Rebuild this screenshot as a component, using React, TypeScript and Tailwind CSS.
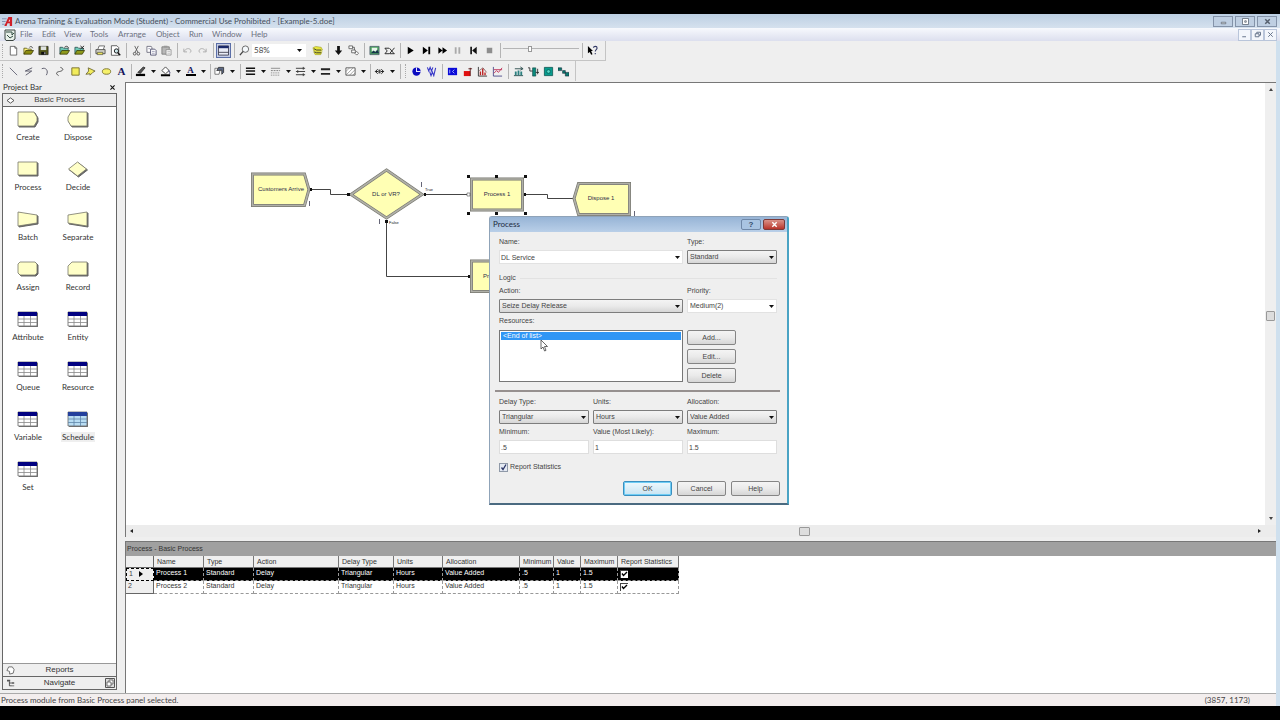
import { useState } from 'react';
import type { ReactNode } from 'react';
import clsx from 'clsx';

/* ---------- toolbar icons, all on a 12x12 grid ---------- */

const icons: Record<string, ReactNode> = {
  new: <path d="M2.5 1.5h5l2 2v7.500h-7zM7.500 1.500v2h2" fill="#fff" stroke="#444" strokeWidth=".8" />,
  open: (
    <>
      <path d="M1 10V3.500h3l1 1h4V6" fill="#fff27a" stroke="#4a4a00" strokeWidth=".8" />
      <path d="M1 10l2-4h8.500l-2.500 4z" fill="#8c8c10" stroke="#333300" strokeWidth=".8" />
      <path d="M7 2.500c1.500-1.500 3-.8 3.500 1" fill="none" stroke="#222" strokeWidth=".8" />
    </>
  ),
  save: (
    <>
      <path d="M1 1.500h10v9H1z" fill="#55581c" stroke="#222" strokeWidth=".8" />
      <path d="M3 1.500h6v4H3z" fill="#dfe3e0" />
      <path d="M3.500 7.500h5v3h-5z" fill="#111" />
      <path d="M7 8h1v2H7z" fill="#ddd" />
    </>
  ),
  attach: (
    <>
      <path d="M1 10V2.500h3l1 1h5V6" fill="#6ec9b6" stroke="#244" strokeWidth=".8" />
      <path d="M1 10l2-4h8.500l-2.500 4z" fill="#8e9a1c" stroke="#333300" strokeWidth=".8" />
      <path d="M6 2.500c2-2 4-1 4.500 1" fill="none" stroke="#222" strokeWidth=".9" />
    </>
  ),
  detach: (
    <>
      <path d="M1 10V2.500h3l1 1h5V6" fill="#6ec9b6" stroke="#244" strokeWidth=".8" />
      <path d="M1 10l2-4h8.500l-2.500 4z" fill="#8e9a1c" stroke="#333300" strokeWidth=".8" />
      <path d="M7 1l4 3.500M11 1L7 4.500" stroke="#222" strokeWidth="1" />
    </>
  ),
  print: (
    <>
      <path d="M3 5l1.500-4h6L9 5" fill="#fff" stroke="#444" strokeWidth=".8" />
      <path d="M1 5h10v4.500H1z" fill="#cfcfc4" stroke="#333" strokeWidth=".8" />
      <path d="M2.500 8h6v2.500h-6z" fill="#e8e05a" stroke="#333" strokeWidth=".6" />
    </>
  ),
  preview: (
    <>
      <path d="M1.500.8h6l2 2v8.400h-8z" fill="#fff" stroke="#333" strokeWidth=".8" />
      <circle cx="7" cy="6.500" r="2.300" fill="#cde7ea" stroke="#111" strokeWidth="1" />
      <path d="M8.500 8.500l2.700 2.700" stroke="#111" strokeWidth="1.400" />
    </>
  ),
  cut: (
    <>
      <path d="M4 1l3.500 7M8 1L4.500 8" stroke="#555" strokeWidth=".9" />
      <circle cx="4" cy="9.500" r="1.500" fill="none" stroke="#555" />
      <circle cx="8" cy="9.500" r="1.500" fill="none" stroke="#555" />
    </>
  ),
  copy: (
    <>
      <path d="M1 1.500h4.500l1 1V8H1z" fill="#fff" stroke="#667" strokeWidth=".9" />
      <path d="M5 4.500h4.500l1.500 1.500v5H5z" fill="#fff" stroke="#446" strokeWidth=".9" />
      <path d="M6.500 7h3M6.500 9h3M2.500 4h2" stroke="#779" strokeWidth=".7" />
    </>
  ),
  paste: (
    <>
      <path d="M1 2h8v8H1z" fill="#b8b8b8" stroke="#777" strokeWidth=".9" />
      <path d="M3 .8h4v2H3z" fill="#999" />
      <path d="M5.500 5h5.500v6H5.500z" fill="#f4f4f4" stroke="#888" strokeWidth=".8" />
      <path d="M7 7h3M7 9h3" stroke="#aaa" strokeWidth=".7" />
    </>
  ),
  undo: <path d="M2 4v3.500h3.500M2.500 7C4 3.500 8 3 9.500 5.500c.6 1.200 0 2.500-1 3" fill="none" stroke="#aaa" />,
  redo: <path d="M10 4v3.500H6.500M9.500 7C8 3.500 4 3 2.500 5.500c-.6 1.200 0 2.500 1 3" fill="none" stroke="#aaa" />,
  split: (
    <>
      <path d="M.5 1h11v10H.5z" fill="#e9ecf6" stroke="#334" strokeWidth=".9" />
      <path d="M.5 1h11v2.500H.5z" fill="#1b2a6b" />
      <path d="M.5 8h11" stroke="#334" strokeWidth=".9" />
    </>
  ),
  zoom: (
    <>
      <circle cx="7" cy="4.500" r="3.500" fill="#f4f8fb" stroke="#555" strokeWidth=".9" />
      <path d="M4.500 7L1 11" stroke="#444" strokeWidth="1.500" />
    </>
  ),
  layers: (
    <>
      <path d="M1 3l3-1.500 6 1 1.500 3-3.500 2-6-1z" fill="#e7e63a" stroke="#99992a" strokeWidth=".6" />
      <path d="M1.500 7l2 3.500h6L11 7" fill="#e2e030" stroke="#99992a" strokeWidth=".6" />
      <path d="M2 4l3 1.500h5M2.500 7.500L5 8.500h5" fill="none" stroke="#333" strokeWidth="1" />
    </>
  ),
  submodel: <path d="M4.500 1h3v5H10l-4 5-4-5h2.500z" fill="#111" />,
  connect: (
    <>
      <path d="M1 1h4v3H1zM4 5.500h4v3H4z" fill="#fff" stroke="#444" strokeWidth=".8" />
      <path d="M9.500 7l2 2-2 2-2-2z" fill="#fff" stroke="#444" strokeWidth=".8" />
      <path d="M5 2.500h2v3" fill="none" stroke="#444" strokeWidth=".8" />
    </>
  ),
  picture: (
    <>
      <path d="M1 1.500h10v9H1z" fill="#4fa562" stroke="#456" strokeWidth=".8" />
      <path d="M3 3h6v4H3z" fill="#e8f4ea" />
      <path d="M2 9l3-3 2 2 2-3 2 4z" fill="#14324a" />
    </>
  ),
  expr: <path d="M5.500 3.500H1L3.500 6.500 1 9.500h5l5.500-6.500M6 3.500l5 6M6.500 9.500h5" fill="none" stroke="#222" strokeWidth="1" />,
  play: <path d="M3 2l6.500 4L3 10z" fill="#000" />,
  step: <path d="M2 2l5.500 4L2 10zM8 2h2v8H8z" fill="#000" />,
  fast: <path d="M1.500 2.500L6 6 1.500 9.500zM6 2.500L11 6 6 9.500z" fill="#000" />,
  pause: <path d="M3 2.500h2v7H3zM7 2.500h2v7H7z" fill="#aaa" />,
  start: <path d="M2.500 2h1.800v8H2.500zM9.500 2v8L4.500 6z" fill="#111" />,
  stop: <path d="M3 3h6v6H3z" fill="#8e8e8e" />,
  help: (
    <>
      <path d="M1 1l5.500 5.500H4.500L6 10l-1.500.6L3 7.500 1 9z" fill="#000" />
      <path d="M7 3c.3-2 4-2 4 .2 0 1.800-2 1.800-2 4M9 8.800v1.400" fill="none" stroke="#333a66" strokeWidth="1.200" />
    </>
  ),
  line: <path d="M2 2l8 8" stroke="#667" />,
  polyline: <path d="M10 2L2.500 5.500h7L3 10" fill="none" stroke="#556" />,
  arc: <path d="M3 3c4-2 8 2 5 7" fill="none" stroke="#556" />,
  bezier: <path d="M7 1.500c5 2 2 4-1 4.500S1 8 5 10.500" fill="none" stroke="#444" />,
  box: <path d="M2 2h8v8H2z" fill="#f2ec5c" stroke="#77702a" />,
  polygon: <path d="M3.500 2l7.500 3.500-2.500 1.500-3 3v-1.500l-4.500.5 3-3.500z" fill="#f2ec5c" stroke="#666030" strokeWidth=".9" />,
  ellipse: <ellipse cx="6" cy="6" rx="4.500" ry="3" fill="#f6f16a" stroke="#77702a" />,
  lineColor: (
    <>
      <path d="M3 7l6-6 2 1-5 6z" fill="#555" stroke="#111" strokeWidth=".7" />
      <path d="M1 8.500h10V11H1z" fill="#000" />
    </>
  ),
  fillColor: (
    <>
      <path d="M2 5l4-4 4 4-4 3.500z" fill="#fff" stroke="#333" strokeWidth=".9" />
      <path d="M9 5c2 1 2 2 1.500 3.500" stroke="#336" fill="none" />
      <path d="M1 9h10v2.200H1z" fill="#000" />
    </>
  ),
  shades: (
    <>
      <path d="M1 2.500h6l-1.500 6.500H1z" fill="#fff" stroke="#555" strokeWidth=".8" />
      <path d="M3 5l2-3.500h5.500V7L8.500 9V4.500z" fill="#5d6a86" stroke="#222" strokeWidth=".8" />
    </>
  ),
  weight: <path d="M1 2.500h10M1 5.500h10M1 9h10" stroke="#111" strokeWidth="1.600" />,
  dashes: (
    <>
      <path d="M1 2.500h10" stroke="#888" />
      <path d="M1 5h10" stroke="#777" strokeDasharray="2 1" />
      <path d="M1 7.500h10M1 10h10" stroke="#777" strokeDasharray="1 1" />
    </>
  ),
  arrows: <path d="M1 2.500h10M1 6h10M1 9.500h10M9 1v3M3 4.500v3M9 8v3" fill="none" stroke="#333" />,
  lineStyle: <path d="M1 3.500h10M1 8.500h10" stroke="#222" strokeWidth="2" />,
  hatch: (
    <>
      <path d="M1 2h10v8H1z" fill="#fff" stroke="#333" strokeWidth=".8" />
      <path d="M1 6l4-4M1 10l8-8M5 10l6-6M8.500 10L11 7.500" stroke="#777" strokeWidth=".7" />
    </>
  ),
  arrowEnd: <path d="M4 3.500L1.500 6 4 8.500M8 3.500L10.500 6 8 8.500M1.500 6h3M7.500 6h3M5.500 4v4M6.500 4v4" fill="none" stroke="#111" />,
  clock: (
    <>
      <circle cx="6" cy="6" r="4.500" fill="#0b0bc0" />
      <path d="M6 1.500V6h4.500" stroke="#e8e8ff" strokeWidth="1.100" fill="none" />
    </>
  ),
  date: <path d="M1.500 1.500l1.500 4 1.500-4 1.500 4 1.500-4M4 6l1.500 4.500L7 6.500l1.500 4L10.500 2" fill="none" stroke="#3838c8" strokeWidth="1.200" />,
  variable: (
    <>
      <path d="M1 2h10v8H1z" fill="#0a0ad8" />
      <path d="M3 4v4M8 4l-2 2 2 2" stroke="#a9b2ff" fill="none" />
    </>
  ),
  level: (
    <>
      <path d="M2 5.500h7V11H2z" fill="#e01010" />
      <path d="M9 2v9M7 3h4" stroke="#501010" strokeWidth=".9" />
    </>
  ),
  histogram: (
    <>
      <path d="M1.500 1v10H11" stroke="#222" fill="none" strokeWidth=".9" />
      <path d="M3 10V6h1.500v4zM5.500 10V3H7v7zM8 10V7h1.500v3z" fill="#b22" />
      <path d="M2.500 5l4-3 4 5" stroke="#622" fill="none" strokeWidth=".7" />
    </>
  ),
  plot: (
    <>
      <path d="M1.500 1v10H11" stroke="#3c3c80" fill="none" strokeWidth=".9" />
      <path d="M2 8l3-3 2 2 4-5M2 4h9" stroke="#c0345c" fill="none" />
    </>
  ),
  queue: (
    <>
      <path d="M1 10.500h10M2 3h8M8 1l3 2-3 1.500" stroke="#173b3b" fill="none" strokeWidth=".9" />
      <path d="M2 6h2v4H2zM5 5h2v5H5zM8 6h2v4H8z" fill="#2b8080" />
    </>
  ),
  resource: (
    <>
      <path d="M5 2h3.500v9H5z" fill="#0a8a7c" stroke="#0a3b38" strokeWidth=".6" />
      <path d="M0 2h2v3.500h3M8.500 7H12M10.500 3v6" stroke="#222" fill="none" strokeWidth=".9" />
    </>
  ),
  global: (
    <>
      <path d="M1.500 1.500h9v9h-9z" fill="#079b8d" stroke="#064d48" strokeWidth=".8" />
      <circle cx="6" cy="6" r="2" fill="#55d8c8" stroke="#064d48" strokeWidth=".7" />
    </>
  ),
  route: <path d="M0 2h4v3H0zM5 5h3v3H5zM8 7h4v4H8z" fill="#0a7a70" stroke="#123" strokeWidth=".6" />,
};

const Icon = ({ name }: { name: string }) => (
  <svg viewBox="0 0 12 12" className="size-[11px] shrink-0" aria-hidden="true">
    {icons[name]}
  </svg>
);

const Caret = () => (
  <svg viewBox="0 0 5 3" className="h-[3px] w-[5px] shrink-0" aria-hidden="true">
    <path d="M0 0h5L2.500 3z" fill="#111" />
  </svg>
);

const Tool = ({ name, active }: { name: string; active?: boolean }) => (
  <button
    type="button"
    aria-label={name}
    className={clsx(
      'flex h-[15px] w-[15px] shrink-0 items-center justify-center',
      active && 'border border-[#5b6fa8] bg-[#c5cde6]'
    )}
  >
    <Icon name={name} />
  </button>
);

const FontTool = ({ label, bar }: { label: string; bar?: boolean }) => (
  <button type="button" aria-label={label} className="flex h-[15px] w-[15px] shrink-0 flex-col items-center justify-center">
    <span
      className={clsx(
        "font-['Liberation_Serif',serif] font-bold text-[#15155c]",
        bar ? 'text-[9px] leading-[8px]' : 'text-[11px] leading-[12px]'
      )}
    >
      A
    </span>
    {bar && <span className="h-[2px] w-[10px] bg-black" />}
  </button>
);

const DropTool = ({ name }: { name: string }) => (
  <div className="flex w-[25px] shrink-0 items-center">
    {name === 'fontColor' ? <FontTool label="fontColor" bar /> : <Tool name={name} />}
    <button type="button" aria-label={`${name} options`} className="flex h-[15px] w-[10px] items-center justify-center">
      <Caret />
    </button>
  </div>
);

const Sep = () => (
  <div className="flex w-[6px] shrink-0 justify-center">
    <div className="h-[15px] w-px bg-[#b4b4b4]" />
  </div>
);

const ThinSep = () => (
  <div className="flex w-[4px] shrink-0 justify-center">
    <div className="h-[15px] w-px bg-[#b4b4b4]" />
  </div>
);

const Grip = () => <div className="mx-[2px] h-[14px] w-[2px] shrink-0 border-l border-dotted border-[#aaa]" />;

const Tools = ({ names }: { names: string[] }) => (
  <>
    {names.map((n) => (
      <Tool key={n} name={n} />
    ))}
  </>
);

/* ---------- window chrome ---------- */

const ArenaLogo = () => (
  <svg viewBox="0 0 12 12" className="size-[11px]" aria-hidden="true">
    <path d="M0 3h5M0 6h4M0 9h3" stroke="#7f8fb0" />
    <path d="M7 1h4v10H8.500V8H6l-1 3H2.500z" fill="#cf1f28" />
    <path d="M8.500 3.500V6H7z" fill="#fff" />
  </svg>
);

const ModelLogo = () => (
  <svg viewBox="0 0 12 12" className="size-[12px]" aria-hidden="true">
    <path d="M1 1h10v9l-2 1.500H2L1 10z" fill="#e8f0ea" stroke="#3a4440" />
    <path d="M2 3h6v3l2-2M3 6l3 3 3-2" fill="none" stroke="#2f4a40" />
  </svg>
);

const menus = [
  ['File', 'w-[22px]'],
  ['Edit', 'w-[22px]'],
  ['View', 'w-[26px]'],
  ['Tools', 'w-[28px]'],
  ['Arrange', 'w-[38px]'],
  ['Object', 'w-[33px]'],
  ['Run', 'w-[23px]'],
  ['Window', 'w-[39px]'],
  ['Help', 'w-[22px]'],
];

const TitleBar = () => (
  <header>
    <div className="flex h-[14px] items-center justify-between bg-linear-to-b from-[#bccfe3] to-[#d5e1ee] pl-[2px] pr-[3px]">
      <div className="flex items-center gap-[2px]">
        <ArenaLogo />
        <h1 className="text-[8px] leading-[14px] text-[#454e5a]">
          Arena Training &amp; Evaluation Mode (Student) - Commercial Use Prohibited - [Example-5.doe]
        </h1>
      </div>
      <div className="flex gap-[2px]">
        {['M3 7h6v2H3z', 'M2 2h8v8H2zM5 5h2v2H5z', 'M3 3l6 6M9 3L3 9'].map((d, i) => (
          <button
            key={d}
            type="button"
            aria-label={['Minimize', 'Restore', 'Close'][i]}
            className="flex h-[11px] w-[20px] items-center justify-center border border-[#8493a9] bg-[#bfcfe2]"
          >
            <svg viewBox="0 0 12 12" className="size-[9px]">
              <path d={d} fill={i === 2 ? 'none' : '#fff'} stroke="#56606e" strokeWidth={i === 2 ? 2 : 1} />
            </svg>
          </button>
        ))}
      </div>
    </div>
    <div className="flex h-[13px] items-center justify-between bg-linear-to-b from-[#f7f9fd] to-[#dcdfee] pl-[4px] pr-[3px]">
      <nav className="flex items-center">
        <ModelLogo />
        <div className="ml-1 flex">
          {menus.map(([label, w]) => (
            <button key={label} type="button" className={clsx('text-left text-[8px] leading-[13px] text-[#6b7080]', w)}>
              {label}
            </button>
          ))}
        </div>
      </nav>
      <div className="flex">
        {['M3 9h5', 'M3 5h5v4H3zM5 5V3h5v4H8', 'M3 3l6 6M9 3L3 9'].map((d, i) => (
          <button
            key={d}
            type="button"
            aria-label={['Minimize model', 'Restore model', 'Close model'][i]}
            className="flex h-[12px] w-[13px] items-center justify-center border border-[#b9c5da] bg-[#f3f6fc]"
          >
            <svg viewBox="0 0 12 12" className="size-[9px]">
              <path d={d} fill="none" stroke="#66748c" strokeWidth="1.300" />
            </svg>
          </button>
        ))}
      </div>
    </div>
  </header>
);

const Toolbars = () => (
  <div className="bg-[#efefef]">
    <div className="flex h-[20px] w-fit items-center border-b border-r border-[#c4c4c4]">
      <Grip />
      <Tools names={['new', 'open', 'save']} />
      <Sep />
      <Tools names={['attach', 'detach']} />
      <Sep />
      <Tools names={['print', 'preview']} />
      <Sep />
      <Tools names={['cut', 'copy', 'paste']} />
      <Sep />
      <Tools names={['undo', 'redo']} />
      <Sep />
      <Tool name="split" active />
      <Sep />
      <Tool name="zoom" />
      <div className="relative mr-1 flex w-[54px] items-center">
        <select
          aria-label="Zoom"
          defaultValue="58%"
          className="h-[13px] w-full appearance-none bg-white pl-[2px] text-[8px] leading-[13px] text-[#444]"
        >
          <option>58%</option>
          <option>100%</option>
        </select>
        <span className="pointer-events-none absolute right-[4px]">
          <Caret />
        </span>
      </div>
      <Tool name="layers" />
      <Sep />
      <Tools names={['submodel', 'connect']} />
      <Sep />
      <Tools names={['picture', 'expr']} />
      <Sep />
      <div className="flex w-[94px] justify-between">
        <Tools names={['play', 'step', 'fast', 'pause', 'start', 'stop']} />
      </div>
      <Sep />
      <input
        type="range"
        aria-label="Animation speed"
        defaultValue={35}
        className="mb-1 h-[8px] w-[76px] appearance-none bg-transparent [&::-webkit-slider-runnable-track]:h-px [&::-webkit-slider-runnable-track]:bg-[#b5b5b5] [&::-webkit-slider-thumb]:-mt-[2px] [&::-webkit-slider-thumb]:h-[6px] [&::-webkit-slider-thumb]:w-[4px] [&::-webkit-slider-thumb]:appearance-none [&::-webkit-slider-thumb]:border [&::-webkit-slider-thumb]:border-[#999] [&::-webkit-slider-thumb]:bg-white"
      />
      <Sep />
      <Tool name="help" />
      <div className="w-[5px]" />
    </div>
    <div className="flex h-[20px] w-fit items-center border-r border-[#c4c4c4]">
      <Grip />
      <div className="flex w-[123px] justify-between">
        <Tools names={['line', 'polyline', 'arc', 'bezier', 'box', 'polygon', 'ellipse']} />
        <FontTool label="Text" />
      </div>
      <ThinSep />
      <DropTool name="lineColor" />
      <DropTool name="fillColor" />
      <DropTool name="fontColor" />
      <ThinSep />
      <DropTool name="shades" />
      <Sep />
      <DropTool name="weight" />
      <DropTool name="dashes" />
      <DropTool name="arrows" />
      <DropTool name="lineStyle" />
      <DropTool name="hatch" />
      <ThinSep />
      <DropTool name="arrowEnd" />
      <Sep />
      <Grip />
      <Tools names={['clock', 'date']} />
      <Sep />
      <Tools names={['variable', 'level', 'histogram', 'plot']} />
      <Sep />
      <Tools names={['queue', 'resource', 'global', 'route']} />
      <div className="w-[4px]" />
    </div>
  </div>
);

/* ---------- project bar ---------- */

const shapes: Record<string, string> = {
  Create: 'M1 1h16l3 5v4l-3 5H1z',
  Dispose: 'M4 1h16v14H4L1 10V6z',
  Process: 'M1 1h19v13H1z',
  Decide: 'M10.5 1l9 7-9 7-9-7z',
  Batch: 'M1 1l19 3v8L1 15z',
  Separate: 'M20 1v14L1 12V4z',
  Assign: 'M3 1h15l2 2v9l-2 2H3l-2-2V3z',
  Record: 'M5 1h15v13H1V5z',
};

const paletteItems = [
  'Create', 'Dispose', 'Process', 'Decide', 'Batch', 'Separate', 'Assign', 'Record',
  'Attribute', 'Entity', 'Queue', 'Resource', 'Variable', 'Schedule', 'Set',
];

const PaletteIcon = ({ name, selected }: { name: string; selected: boolean }) => (
  <svg viewBox="0 0 22 17" className="h-[17px] w-[22px]" aria-hidden="true">
    {shapes[name] ? (
      <>
        <path d={shapes[name]} fill="#666" stroke="#666" transform="translate(1 1)" />
        <path d={shapes[name]} fill="#ffffc8" stroke="#77776a" strokeWidth=".8" />
      </>
    ) : (
      <>
        <path d="M2 2h19v14H2z" fill="#777" />
        <path d="M1 1h19v14H1z" fill={selected ? '#b9ddf3' : '#fff'} stroke="#666" strokeWidth=".8" />
        <path d="M1 1h19v4H1z" fill={selected ? '#233f9c' : '#000080'} />
        <path d="M1 8h19M1 11.500h19M7 5v10M13.500 5v10" stroke={selected ? '#5f86a8' : '#888'} strokeWidth=".8" />
      </>
    )}
  </svg>
);

const ProjectBar = () => {
  const [selected, setSelected] = useState('Schedule');
  return (
    <aside className="flex w-[124px] shrink-0 flex-col bg-[#efefef] pb-[3px] pl-[2px] pr-[7px]">
      <div className="flex h-[11px] items-center justify-between pl-px pr-[2px] text-[8px] leading-[11px] text-[#333]">
        <span>Project Bar</span>
        <button type="button" aria-label="Close project bar" className="flex size-[5px] items-center">
          <svg viewBox="0 0 6 6">
            <path d="M.5.5l5 5M5.500.5l-5 5" stroke="#111" strokeWidth="1.300" />
          </svg>
        </button>
      </div>
      <div className="flex min-h-0 grow flex-col border border-[#666] bg-white">
        <button
          type="button"
          className="relative flex h-[13px] shrink-0 items-center justify-center border-b border-[#666] bg-[#ececec] font-['Liberation_Sans',sans-serif] text-[8px] text-[#444]"
        >
          <svg viewBox="0 0 10 8" className="absolute left-[3px] h-[7px] w-[9px]">
            <path d="M5 1l4 3-4 3-4-3z" fill="#fff" stroke="#444" />
          </svg>
          Basic Process
        </button>
        <div className="grid grow grid-cols-[50px_50px] auto-rows-[50px] content-start pt-[4px]">
          {paletteItems.map((name) => (
            <button
              key={name}
              type="button"
              onClick={() => setSelected(name)}
              className="flex flex-col items-center text-[8px] leading-[10px] text-[#333]"
            >
              <PaletteIcon name={name} selected={name === selected} />
              <span className={clsx('mt-1 px-px', name === selected && 'bg-[#efefef]')}>{name}</span>
            </button>
          ))}
        </div>
        <button
          type="button"
          className="relative h-[13px] shrink-0 border-t border-[#999] bg-[#efefef] font-['Liberation_Sans',sans-serif] text-[8px] leading-[12px] text-[#333]"
        >
          <svg viewBox="0 0 10 10" className="absolute left-[3px] top-[2px] size-[9px]">
            <path d="M3 1h4l2 3-1 4-4 1V6L1 5z" fill="#fff" stroke="#666" />
          </svg>
          Reports
        </button>
        <button
          type="button"
          className="relative h-[13px] shrink-0 border-t border-[#666] bg-[#efefef] font-['Liberation_Sans',sans-serif] text-[8px] leading-[12px] text-[#333]"
        >
          <svg viewBox="0 0 10 10" className="absolute left-[4px] top-[2px] size-[8px]">
            <path d="M0 1h4v2H0zM6 4h3v2H6zM6 8h3v1H6z" fill="#555" />
            <path d="M3 3v5.500h3M3 5h3" fill="none" stroke="#333" />
          </svg>
          Navigate
          <svg viewBox="0 0 10 10" className="absolute right-[1px] top-[1px] size-[10px]">
            <path d="M.5.5h9v9h-9z" fill="#ddd" stroke="#555" />
            <path d="M2 4h4v4H2zM4 4V2h4v4H6" fill="#fff" stroke="#555" strokeWidth=".8" />
          </svg>
        </button>
      </div>
    </aside>
  );
};

/* ---------- model canvas ---------- */

const Node = ({ d, x, y, label }: { d: string; x: number; y: number; label: string }) => (
  <g>
    <path d={d} fill="#ffffb4" stroke="#77776f" strokeWidth="3" />
    <path d={d} fill="none" stroke="#b0b0a8" strokeWidth="1.600" />
    <text x={x} y={y} textAnchor="middle" fontSize="6" fill="#2c2c48">
      {label}
    </text>
  </g>
);

const Flowchart = () => (
  <svg
    viewBox="126 83 520 230"
    className="block h-[230px] w-[520px] font-['Liberation_Sans',sans-serif]"
    role="img"
    aria-label="Model flowchart"
  >
    <g fill="none" stroke="#444" strokeWidth="1">
      <path d="M311 189.500h19.500v5H350M425 194.500h44M524 194.500h23.500v4H573M386.500 220v56.500H470" />
    </g>
    <Node d="M252.500 174H304.500L309 189.500L304.500 205.500H252.500z" x={281} y={191} label="Customers Arrive" />
    <Node d="M386.500 170L422 194.500L386.500 218L351 194.500z" x={386} y={196} label="DL or VR?" />
    <Node d="M471.500 179H522.500V210H471.500z" x={497} y={196} label="Process 1" />
    <Node d="M578.500 183.500H629.500V214.500H578.500L574 198.500z" x={601} y={200} label="Dispose 1" />
    <Node d="M471.500 261H522.500V291.500H471.500z" x={486} y={278} label="Pr" />
    <path
      fill="#111"
      d="M467 175h3v3h-3zM495 175h3v3h-3zM524 175h3v3h-3zM467 212h3v3h-3zM495 212h3v3h-3zM524 212h3v3h-3z"
    />
    <path fill="#111" d="M310 188h2v3h-2zM347 193h3v3h-3zM424 193h2v3h-2zM385 220h3v3h-3zM468 275h2v3h-2zM524 193h2v3h-2z" />
    <path d="M467 193h3v3h-3z" fill="#fff" stroke="#555" strokeWidth=".6" />
    <path d="M309.500 201v5M421.500 182v5M379.500 219v5M634.500 211v5" stroke="#667" />
    <text x="425" y="191" fontSize="4" fill="#222">True</text>
    <text x="389" y="224" fontSize="4" fill="#222">False</text>
  </svg>
);

/* ---------- process dialog ---------- */

const face = 'bg-linear-to-b from-[#f4f4f4] via-[#eaeaea] to-[#d6d6d6]';

const Select = ({ id, label, options, flat }: { id: string; label: string; options: string[]; flat?: boolean }) => (
  <div className="flex flex-col gap-[3px]">
    <label htmlFor={id} className="h-[10px] leading-[10px]">{label}</label>
    <div className="relative flex items-center">
      <select
        id={id}
        className={clsx(
          'h-[14px] w-full appearance-none border pl-[2px] leading-[12px]',
          flat ? 'border-[#e2e2e2] bg-white' : ['rounded-[1px] border-[#7d7d7d]', face]
        )}
      >
        {options.map((o) => (
          <option key={o}>{o}</option>
        ))}
      </select>
      <span className="pointer-events-none absolute right-[3px]">
        <Caret />
      </span>
    </div>
  </div>
);

const TextField = ({ id, label, value }: { id: string; label: string; value: string }) => (
  <div className="flex flex-col gap-[3px]">
    <label htmlFor={id} className="h-[10px] leading-[10px]">{label}</label>
    <input id={id} defaultValue={value} className="h-[14px] w-full border border-[#dedede] bg-white pl-px" />
  </div>
);

const DialogButton = ({ children, primary }: { children: ReactNode; primary?: boolean }) => (
  <button
    type="button"
    className={clsx(
      'h-[15px] w-[49px] rounded-[2px] border text-center leading-[13px]',
      primary ? 'border-[#3a8fc0] bg-linear-to-b from-[#eef8fd] to-[#c8e4f2] ring-1 ring-inset ring-[#6fcdf5]' : ['border-[#858585]', face]
    )}
  >
    {children}
  </button>
);

const ProcessDialog = () => (
  <section
    role="dialog"
    aria-label="Process"
    className="absolute left-[363px] top-[133px] w-[300px] rounded-t-[3px] border border-b-2 border-r-2 border-[#8fa3b8] border-b-[#4a6a80] border-r-[#4aa3c4] bg-[#efefef] font-['Liberation_Sans',sans-serif] text-[7px] text-[#444]"
  >
    <div className="flex h-[15px] items-center justify-between bg-linear-to-b from-[#97b4d6] to-[#b9cfe8] pl-[3px] pr-[2px]">
      <h2 className="font-['Lato',sans-serif] text-[8px] leading-[15px] text-[#1d2b40]">Process</h2>
      <div className="mb-px flex gap-[2px]">
        <button type="button" aria-label="Help" className="h-[11px] w-[20px] rounded-[2px] border border-[#6f88a8] bg-[#a9c4e2] text-[8px] font-bold leading-[9px] text-[#33496a]">
          ?
        </button>
        <button type="button" aria-label="Close" className="flex h-[11px] w-[22px] items-center justify-center rounded-[2px] border border-[#7c3a38] bg-linear-to-b from-[#d99088] to-[#b8322a]">
          <svg viewBox="0 0 8 8" className="size-[7px]">
            <path d="M1.500 1.500l5 5M6.500 1.500l-5 5" stroke="#fff" strokeWidth="1.600" />
          </svg>
        </button>
      </div>
    </div>

    <form className="pb-[7px] pl-[9px] pr-[7px] pt-[5px]">
      <div className="grid grid-cols-3 gap-x-1 pr-[3px]">
        <div className="col-span-2 flex flex-col gap-[3px]">
          <label htmlFor="name" className="h-[10px] leading-[10px]">Name:</label>
          <div className="relative flex items-center">
            <input id="name" defaultValue="DL Service" className="h-[14px] w-full border border-[#e2e2e2] bg-white pl-px" />
            <button type="button" aria-label="Names" className="absolute right-[3px]">
              <Caret />
            </button>
          </div>
        </div>
        <Select id="type" label="Type:" options={['Standard', 'Submodel']} />
      </div>

      <fieldset className="mt-[9px] pr-[3px]">
        <div className="mb-[3px] flex items-center gap-1">
          <span className="leading-[10px]">Logic</span>
          <div className="h-px grow bg-[#e2e2e2]" />
        </div>
        <div className="grid grid-cols-3 gap-x-1">
          <div className="col-span-2">
            <Select id="action" label="Action:" options={['Seize Delay Release', 'Delay', 'Seize Delay']} />
          </div>
          <Select id="priority" label="Priority:" options={['Medium(2)', 'High(1)', 'Low(3)']} flat />
        </div>
        <label htmlFor="resources" className="mt-[3px] block leading-[10px]">Resources:</label>
        <div className="mt-[4px] grid grid-cols-3 gap-x-1">
          <ul id="resources" className="col-span-2 h-[52px] border border-[#777] bg-white p-px">
            <li className="bg-[#3096f5] pl-[2px] leading-[8px] text-white">&lt;End of list&gt;</li>
          </ul>
          <div className="flex flex-col gap-1">
            <DialogButton>Add...</DialogButton>
            <DialogButton>Edit...</DialogButton>
            <DialogButton>Delete</DialogButton>
          </div>
        </div>
      </fieldset>

      <hr className="-ml-[4px] mt-[7px] h-[2px] border-0 bg-[#96908f]" />

      <div className="mt-[5px] grid grid-cols-3 gap-x-1 gap-y-[3px] pr-[3px]">
        <Select id="delay" label="Delay Type:" options={['Triangular', 'Constant', 'Normal']} />
        <Select id="units" label="Units:" options={['Hours', 'Minutes']} />
        <Select id="alloc" label="Allocation:" options={['Value Added', 'Transfer']} />
        <TextField id="min" label="Minimum:" value=".5" />
        <TextField id="likely" label="Value (Most Likely):" value="1" />
        <TextField id="max" label="Maximum:" value="1.5" />
      </div>

      <label className="mt-[8px] flex items-center gap-[2px] leading-[10px]">
        <span className="relative flex">
          <input type="checkbox" defaultChecked className="peer size-[9px] appearance-none border border-[#8f99a8] bg-[#e4e9f2]" />
          <svg viewBox="0 0 9 9" className="pointer-events-none absolute inset-0 hidden size-[9px] peer-checked:block">
            <path d="M2.500 4.500l1.500 2 3-5" fill="none" stroke="#2b3566" strokeWidth="1.300" />
          </svg>
        </span>
        Report Statistics
      </label>

      <div className="mt-[9px] flex justify-end gap-[5px]">
        <DialogButton primary>OK</DialogButton>
        <DialogButton>Cancel</DialogButton>
        <DialogButton>Help</DialogButton>
      </div>
    </form>

    <svg viewBox="0 0 9 13" className="pointer-events-none absolute left-[50px] top-[122px] h-[13px] w-[9px]" aria-hidden="true">
      <path d="M1 1v9l2-2 1.600 4 1.400-.6L4.500 7.500H7.500z" fill="#fff" stroke="#444" strokeWidth=".8" />
    </svg>
  </section>
);

const Canvas = () => (
  <div className="flex grow flex-col border-l border-t border-[#777]">
    <div className="flex min-h-0 grow">
      <div className="relative min-w-0 grow bg-white">
        <Flowchart />
        <ProcessDialog />
      </div>
      <div className="flex w-[11px] shrink-0 flex-col items-center justify-between bg-[#efefef] py-[5px]">
        <svg viewBox="0 0 4 3" className="h-[3px] w-[4px]"><path d="M0 3h4L2 0z" fill="#444" /></svg>
        <div className="mt-[23px] h-[10px] w-[9px] rounded-[1px] border border-[#999] bg-[#ddd]" />
        <svg viewBox="0 0 4 3" className="h-[3px] w-[4px]"><path d="M0 0h4L2 3z" fill="#444" /></svg>
      </div>
    </div>
    <div className="flex h-[12px] shrink-0 items-center bg-[#ececec] pl-[4px] pr-[15px]">
      <svg viewBox="0 0 3 4" className="h-[4px] w-[3px]"><path d="M3 0v4L0 2z" fill="#222" /></svg>
      <div className="grow-[667]" />
      <div className="h-[9px] w-[11px] rounded-[1px] border border-[#999] bg-[#ddd]" />
      <div className="grow-[448]" />
      <svg viewBox="0 0 3 4" className="h-[4px] w-[3px]"><path d="M0 0v4l3-2z" fill="#222" /></svg>
    </div>
  </div>
);

/* ---------- spreadsheet ---------- */

const columns = [
  { name: 'Name', w: 'w-[50px]' },
  { name: 'Type', w: 'w-[50px]' },
  { name: 'Action', w: 'w-[85px]' },
  { name: 'Delay Type', w: 'w-[55px]' },
  { name: 'Units', w: 'w-[49px]' },
  { name: 'Allocation', w: 'w-[77px]' },
  { name: 'Minimum', w: 'w-[34px]' },
  { name: 'Value', w: 'w-[27px]' },
  { name: 'Maximum', w: 'w-[37px]' },
  { name: 'Report Statistics', w: 'w-[61px]' },
];

const rows = [
  ['Process 1', 'Standard', 'Delay', 'Triangular', 'Hours', 'Value Added', '.5', '1', '1.5'],
  ['Process 2', 'Standard', 'Delay', 'Triangular', 'Hours', 'Value Added', '.5', '1', '1.5'],
];

const Sheet = () => (
  <section className="h-[152px] shrink-0 border-l border-t border-[#777] bg-white font-['Liberation_Sans',sans-serif] text-[7px] text-[#333]">
    <h2 className="h-[14px] bg-[#a0a0a0] pl-px text-[7px] leading-[14px] text-[#333]">Process - Basic Process</h2>
    <table className="w-[553px] table-fixed border-separate border-spacing-0">
      <thead>
        <tr className="h-[12px] bg-[#efefef]">
          <th className="w-[28px] border-b border-r border-[#666] p-0" aria-label="Row" />
          {columns.map((c) => (
            <th key={c.name} className={clsx('whitespace-nowrap border-b border-r border-[#777] p-0 pl-[3px] text-left font-normal leading-[11px]', c.w)}>
              {c.name}
            </th>
          ))}
        </tr>
      </thead>
      <tbody>
        {rows.map((row, i) => (
          <tr key={row[0]} className={clsx('h-[13px]', i === 0 && 'bg-black text-white')}>
            <th
              scope="row"
              className={clsx(
                'border-b border-r border-[#666] bg-[#efefef] p-0 pl-[2px] text-left align-top font-normal leading-[10px] text-[#444]',
                i === 0 && 'border border-dashed border-black'
              )}
            >
              <span className="flex items-center gap-[6px]">
                {i + 1}
                {i === 0 && (
                  <svg viewBox="0 0 4 6" className="h-[6px] w-[4px]"><path d="M0 0l4 3-4 3z" fill="#000" /></svg>
                )}
              </span>
            </th>
            {row.map((cell, j) => (
              <td key={j} className="whitespace-nowrap border-b border-r border-dashed border-[#999] p-0 pl-[2px] align-top leading-[10px]">
                {cell}
              </td>
            ))}
            <td className="border-b border-r border-dashed border-[#999] p-0 pl-[2px]">
              <span className="relative flex size-[8px]">
                <input
                  type="checkbox"
                  defaultChecked
                  aria-label={`Report statistics for ${row[0]}`}
                  className="peer size-[8px] appearance-none border-l border-t border-[#444] bg-white"
                />
                <svg viewBox="0 0 8 8" className="pointer-events-none absolute inset-0 hidden size-[8px] peer-checked:block">
                  <path d="M2 3.500l1.500 2L7 2" fill="none" stroke="#000" strokeWidth="1.400" />
                </svg>
              </span>
            </td>
          </tr>
        ))}
      </tbody>
    </table>
  </section>
);

export default function App() {
  return (
    <div className="flex h-screen flex-col overflow-hidden bg-black py-[14px] font-['Lato',sans-serif]">
      <TitleBar />
      <div className="flex min-h-0 grow flex-col border-r-4 border-[#cfe0ee] bg-[#efefef]">
        <Toolbars />
        <main className="mt-px flex min-h-0 grow">
          <ProjectBar />
          <div className="flex min-w-0 grow flex-col gap-1 pl-px">
            <Canvas />
            <Sheet />
          </div>
        </main>
        <footer className="flex h-[13px] shrink-0 items-center justify-between border-t border-[#aaa] bg-[#f3eeee] pl-px pr-[26px] text-[8px] leading-[12px] text-[#444]">
          <span>Process module from Basic Process panel selected.</span>
          <span>(3857, 1173)</span>
        </footer>
      </div>
    </div>
  );
}
